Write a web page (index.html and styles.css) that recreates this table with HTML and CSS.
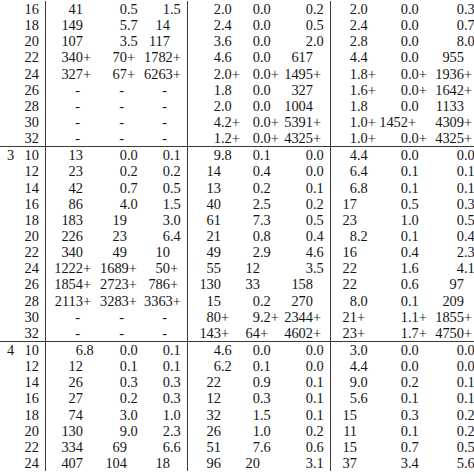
FILE: index.html
```html
<!DOCTYPE html>
<html>
<head>
<meta charset="utf-8">
<link rel="stylesheet" href="styles.css">
</head>
<body>
<div class="tbl">
  <div class="blk">
    <div class="r"><span class="g"></span><span class="n">16</span><span class="a">41<i></i></span><span>0<i>.5</i></span><span>1<i>.5</i></span><span class="a">2<i>.0</i></span><span>0<i>.0</i></span><span>0<i>.2</i></span><span class="a">2<i>.0</i></span><span>0<i>.0</i></span><span>0<i>.3</i></span></div>
    <div class="r"><span class="g"></span><span class="n">18</span><span class="a">149<i></i></span><span>5<i>.7</i></span><span>14<i></i></span><span class="a">2<i>.4</i></span><span>0<i>.0</i></span><span>0<i>.5</i></span><span class="a">2<i>.4</i></span><span>0<i>.0</i></span><span>0<i>.7</i></span></div>
    <div class="r"><span class="g"></span><span class="n">20</span><span class="a">107<i></i></span><span>3<i>.5</i></span><span>117<i></i></span><span class="a">3<i>.6</i></span><span>0<i>.0</i></span><span>2<i>.0</i></span><span class="a">2<i>.8</i></span><span>0<i>.0</i></span><span>8<i>.0</i></span></div>
    <div class="r"><span class="g"></span><span class="n">22</span><span class="a">340<i>+</i></span><span>70<i>+</i></span><span>1782<i>+</i></span><span class="a">4<i>.6</i></span><span>0<i>.0</i></span><span>617<i></i></span><span class="a">4<i>.4</i></span><span>0<i>.0</i></span><span>955<i></i></span></div>
    <div class="r"><span class="g"></span><span class="n">24</span><span class="a">327<i>+</i></span><span>67<i>+</i></span><span>6263<i>+</i></span><span class="a">2<i>.0+</i></span><span>0<i>.0+</i></span><span>1495<i>+</i></span><span class="a">1<i>.8+</i></span><span>0<i>.0+</i></span><span>1936<i>+</i></span></div>
    <div class="r"><span class="g"></span><span class="n">26</span><span class="a d">-<i></i></span><span class="d">-<i></i></span><span class="d">-<i></i></span><span class="a">1<i>.8</i></span><span>0<i>.0</i></span><span>327<i></i></span><span class="a">1<i>.6+</i></span><span>0<i>.0+</i></span><span>1642<i>+</i></span></div>
    <div class="r"><span class="g"></span><span class="n">28</span><span class="a d">-<i></i></span><span class="d">-<i></i></span><span class="d">-<i></i></span><span class="a">2<i>.0</i></span><span>0<i>.0</i></span><span>1004<i></i></span><span class="a">1<i>.8</i></span><span>0<i>.0</i></span><span>1133<i></i></span></div>
    <div class="r"><span class="g"></span><span class="n">30</span><span class="a d">-<i></i></span><span class="d">-<i></i></span><span class="d">-<i></i></span><span class="a">4<i>.2+</i></span><span>0<i>.0+</i></span><span>5391<i>+</i></span><span class="a">1<i>.0+</i></span><span>1452<i>+</i></span><span>4309<i>+</i></span></div>
    <div class="r"><span class="g"></span><span class="n">32</span><span class="a d">-<i></i></span><span class="d">-<i></i></span><span class="d">-<i></i></span><span class="a">1<i>.2+</i></span><span>0<i>.0+</i></span><span>4325<i>+</i></span><span class="a">1<i>.0+</i></span><span>0<i>.0+</i></span><span>4325<i>+</i></span></div>
  </div>
  <div class="blk">
    <div class="r"><span class="g">3</span><span class="n">10</span><span class="a">13<i></i></span><span>0<i>.0</i></span><span>0<i>.1</i></span><span class="a">9<i>.8</i></span><span>0<i>.1</i></span><span>0<i>.0</i></span><span class="a">4<i>.4</i></span><span>0<i>.0</i></span><span>0<i>.0</i></span></div>
    <div class="r"><span class="g"></span><span class="n">12</span><span class="a">23<i></i></span><span>0<i>.2</i></span><span>0<i>.2</i></span><span class="a">14<i></i></span><span>0<i>.4</i></span><span>0<i>.0</i></span><span class="a">6<i>.4</i></span><span>0<i>.1</i></span><span>0<i>.1</i></span></div>
    <div class="r"><span class="g"></span><span class="n">14</span><span class="a">42<i></i></span><span>0<i>.7</i></span><span>0<i>.5</i></span><span class="a">13<i></i></span><span>0<i>.2</i></span><span>0<i>.1</i></span><span class="a">6<i>.8</i></span><span>0<i>.1</i></span><span>0<i>.1</i></span></div>
    <div class="r"><span class="g"></span><span class="n">16</span><span class="a">86<i></i></span><span>4<i>.0</i></span><span>1<i>.5</i></span><span class="a">40<i></i></span><span>2<i>.5</i></span><span>0<i>.2</i></span><span class="a">17<i></i></span><span>0<i>.5</i></span><span>0<i>.3</i></span></div>
    <div class="r"><span class="g"></span><span class="n">18</span><span class="a">183<i></i></span><span>19<i></i></span><span>3<i>.0</i></span><span class="a">61<i></i></span><span>7<i>.3</i></span><span>0<i>.5</i></span><span class="a">23<i></i></span><span>1<i>.0</i></span><span>0<i>.5</i></span></div>
    <div class="r"><span class="g"></span><span class="n">20</span><span class="a">226<i></i></span><span>23<i></i></span><span>6<i>.4</i></span><span class="a">21<i></i></span><span>0<i>.8</i></span><span>0<i>.4</i></span><span class="a">8<i>.2</i></span><span>0<i>.1</i></span><span>0<i>.4</i></span></div>
    <div class="r"><span class="g"></span><span class="n">22</span><span class="a">340<i></i></span><span>49<i></i></span><span>10<i></i></span><span class="a">49<i></i></span><span>2<i>.9</i></span><span>4<i>.6</i></span><span class="a">16<i></i></span><span>0<i>.4</i></span><span>2<i>.3</i></span></div>
    <div class="r"><span class="g"></span><span class="n">24</span><span class="a">1222<i>+</i></span><span>1689<i>+</i></span><span>50<i>+</i></span><span class="a">55<i></i></span><span>12<i></i></span><span>3<i>.5</i></span><span class="a">22<i></i></span><span>1<i>.6</i></span><span>4<i>.1</i></span></div>
    <div class="r"><span class="g"></span><span class="n">26</span><span class="a">1854<i>+</i></span><span>2723<i>+</i></span><span>786<i>+</i></span><span class="a">130<i></i></span><span>33<i></i></span><span>158<i></i></span><span class="a">22<i></i></span><span>0<i>.6</i></span><span>97<i></i></span></div>
    <div class="r"><span class="g"></span><span class="n">28</span><span class="a">2113<i>+</i></span><span>3283<i>+</i></span><span>3363<i>+</i></span><span class="a">15<i></i></span><span>0<i>.2</i></span><span>270<i></i></span><span class="a">8<i>.0</i></span><span>0<i>.1</i></span><span>209<i></i></span></div>
    <div class="r"><span class="g"></span><span class="n">30</span><span class="a d">-<i></i></span><span class="d">-<i></i></span><span class="d">-<i></i></span><span class="a">80<i>+</i></span><span>9<i>.2+</i></span><span>2344<i>+</i></span><span class="a">21<i>+</i></span><span>1<i>.1+</i></span><span>1855<i>+</i></span></div>
    <div class="r"><span class="g"></span><span class="n">32</span><span class="a d">-<i></i></span><span class="d">-<i></i></span><span class="d">-<i></i></span><span class="a">143<i>+</i></span><span>64<i>+</i></span><span>4602<i>+</i></span><span class="a">23<i>+</i></span><span>1<i>.7+</i></span><span>4750<i>+</i></span></div>
  </div>
  <div class="blk">
    <div class="r"><span class="g">4</span><span class="n">10</span><span class="a">6<i>.8</i></span><span>0<i>.0</i></span><span>0<i>.1</i></span><span class="a">4<i>.6</i></span><span>0<i>.0</i></span><span>0<i>.0</i></span><span class="a">3<i>.0</i></span><span>0<i>.0</i></span><span>0<i>.0</i></span></div>
    <div class="r"><span class="g"></span><span class="n">12</span><span class="a">12<i></i></span><span>0<i>.1</i></span><span>0<i>.1</i></span><span class="a">6<i>.2</i></span><span>0<i>.1</i></span><span>0<i>.0</i></span><span class="a">4<i>.4</i></span><span>0<i>.0</i></span><span>0<i>.0</i></span></div>
    <div class="r"><span class="g"></span><span class="n">14</span><span class="a">26<i></i></span><span>0<i>.3</i></span><span>0<i>.3</i></span><span class="a">22<i></i></span><span>0<i>.9</i></span><span>0<i>.1</i></span><span class="a">9<i>.0</i></span><span>0<i>.2</i></span><span>0<i>.1</i></span></div>
    <div class="r"><span class="g"></span><span class="n">16</span><span class="a">27<i></i></span><span>0<i>.2</i></span><span>0<i>.3</i></span><span class="a">12<i></i></span><span>0<i>.3</i></span><span>0<i>.1</i></span><span class="a">5<i>.6</i></span><span>0<i>.1</i></span><span>0<i>.1</i></span></div>
    <div class="r"><span class="g"></span><span class="n">18</span><span class="a">74<i></i></span><span>3<i>.0</i></span><span>1<i>.0</i></span><span class="a">32<i></i></span><span>1<i>.5</i></span><span>0<i>.1</i></span><span class="a">15<i></i></span><span>0<i>.3</i></span><span>0<i>.2</i></span></div>
    <div class="r"><span class="g"></span><span class="n">20</span><span class="a">130<i></i></span><span>9<i>.0</i></span><span>2<i>.3</i></span><span class="a">26<i></i></span><span>1<i>.0</i></span><span>0<i>.2</i></span><span class="a">11<i></i></span><span>0<i>.1</i></span><span>0<i>.2</i></span></div>
    <div class="r"><span class="g"></span><span class="n">22</span><span class="a">334<i></i></span><span>69<i></i></span><span>6<i>.6</i></span><span class="a">51<i></i></span><span>7<i>.6</i></span><span>0<i>.6</i></span><span class="a">15<i></i></span><span>0<i>.7</i></span><span>0<i>.5</i></span></div>
    <div class="r"><span class="g"></span><span class="n">24</span><span class="a">407<i></i></span><span>104<i></i></span><span>18<i></i></span><span class="a">96<i></i></span><span>20<i></i></span><span>3<i>.1</i></span><span class="a">37<i></i></span><span>3<i>.4</i></span><span>5<i>.6</i></span></div>
  </div>
</div>
</body>
</html>
```

FILE: styles.css
```css
html, body {
  margin: 0;
  padding: 0;
  background: #ffffff;
}
body {
  width: 474px;
  height: 474px;
  overflow: hidden;
}
.tbl {
  padding-top: 1px;
  width: 481px;
  font-family: "Liberation Serif", "Times New Roman", serif;
  font-size: 14.4px;
  color: #141414;
}
.blk + .blk {
  border-top: 1px solid #3a3a3a;
}
.r {
  display: grid;
  grid-template-columns: 20px 25px 55px 44px 43px 51px 39px 53px 44px 51px 56px;
  height: 16.15px;
  line-height: 16.15px;
  white-space: nowrap;
}
.r > span {
  box-sizing: border-box;
  text-align: right;
}
.r > .g {
  text-align: left;
  padding-left: 7px;
}
.r > .n {
  padding-right: 6px;
}
.r > .a {
  border-left: 1px solid #3a3a3a;
}
.r > span i {
  display: inline-block;
  width: 17px;
  text-align: left;
  font-style: normal;
}
.r > .d {
  padding-right: 3px;
}
```
